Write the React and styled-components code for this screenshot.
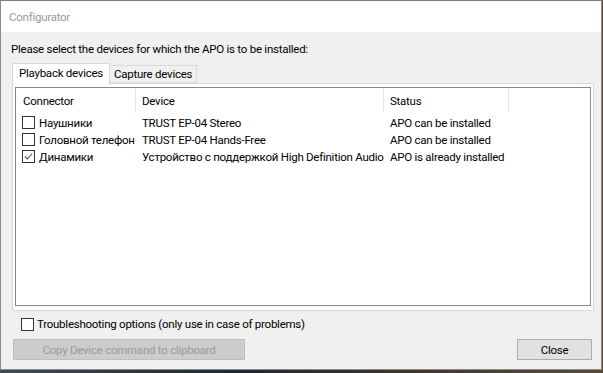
import React from 'react';
import styled, { createGlobalStyle } from 'styled-components';

const Global = createGlobalStyle`
    html, body {
        margin: 0;
        padding: 0;
        background: #2f3a44;
    }
    body {
        font-family: Roboto, "Noto Sans", sans-serif;
        font-size: 11.5px;
        letter-spacing: -0.25px;
        color: #000;
    }
`

const Desktop = styled.div`
    width: 603px;
    height: 373px;
    background: linear-gradient(90deg, #3d4a56, #22272c 40%, #5a4a38 100%);
    overflow: hidden;
`
const Window = styled.div`
    width: 600px;
    height: 368px;
    border: 1px solid #8c8c8c;
    border-top-color: #6e7f92;
    background: #f0f0f0;
    display: flex;
    flex-direction: column;
`
const TitleBar = styled.div`
    height: 31px;
    background: #fff;
    display: flex;
    align-items: center;
    padding-left: 8px;
    color: #999;
`
const Body = styled.div`
    flex: 1;
    padding: 9px 8px 0 10px;
    display: flex;
    flex-direction: column;
`
const Prompt = styled.div`
    line-height: 16px;
    height: 16px;
    margin-bottom: 6px;
`
const Tabs = styled.div`
    display: flex;
    align-items: flex-end;
    margin-left: 1px;
    height: 20px;
    position: relative;
    z-index: 1;
`
const Tab = styled.div`
    box-sizing: border-box;
    height: ${p => p.$active ? '21px' : '18px'};
    margin-bottom: ${p => p.$active ? '-1px' : '0'};
    padding: ${p => p.$active ? '2px 6px 0 6px' : '1px 4px 0 4px'};
    background: ${p => p.$active ? '#fff' : '#f0f0f0'};
    border: 1px solid #d9d9d9;
    border-bottom: ${p => p.$active ? 'none' : '1px solid #d9d9d9'};
    margin-left: ${p => p.$active ? '0' : '-1px'};
    line-height: 15px;
    white-space: nowrap;
`
const Panel = styled.div`
    margin-left: 1px;
    width: 582px;
    height: 228px;
    box-sizing: border-box;
    background: #fff;
    border: 1px solid #d9d9d9;
    padding: 3px 2px 4px 2px;
`
const ListView = styled.div`
    height: 100%;
    box-sizing: border-box;
    border: 1px solid #828790;
    background: #fff;
`
const Grid = styled.div`
    display: grid;
    grid-template-columns: 120px 248px 125px;
`
const HeaderCell = styled.div`
    height: 24px;
    box-sizing: border-box;
    border-right: 1px solid #e5e5e5;
    padding-left: ${p => p.$first ? '7px' : '6px'};
    display: flex;
    align-items: center;
    padding-top: 2px;
    white-space: nowrap;
`
const Rows = styled.div`
    padding-top: 2px;
`
const Row = styled.div`
    display: grid;
    grid-template-columns: 120px 248px 125px;
    height: 17px;
    align-items: center;
    white-space: nowrap;
`
const Cell = styled.div`
    padding-left: 6px;
    display: flex;
    align-items: center;
    gap: 4px;
    overflow: hidden;
`
const Box = styled.span`
    width: 11px;
    height: 11px;
    border: 1px solid #333;
    background: #fff;
    flex: none;
    display: inline-flex;
    align-items: center;
    justify-content: center;
`
const Footer = styled.div`
    display: flex;
    align-items: center;
    gap: 3px;
    margin: 6px 0 0 10px;
    height: 14px;
`
const Buttons = styled.div`
    display: flex;
    justify-content: space-between;
    margin: 8px 1px 0 2px;
`
const Button = styled.div`
    box-sizing: border-box;
    width: ${p => p.$w}px;
    height: 21px;
    display: flex;
    align-items: center;
    justify-content: center;
    background: ${p => p.$disabled ? '#cccccc' : '#e1e1e1'};
    border: 1px solid ${p => p.$disabled ? '#bfbfbf' : '#adadad'};
    color: ${p => p.$disabled ? '#9a9a9a' : '#000'};
`

const Check = ({ checked }) => (
    <Box>
        {checked && (
            <svg width="9" height="9" viewBox="0 0 9 9">
                <path d="M0.8 4.5 L3.3 7 L8.3 1.5" fill="none" stroke="#555" strokeWidth="1.1" />
            </svg>
        )}
    </Box>
)

const devices = [
    { connector: 'Наушники', device: 'TRUST EP-04 Stereo', status: 'APO can be installed', checked: false },
    { connector: 'Головной телефон', device: 'TRUST EP-04 Hands-Free', status: 'APO can be installed', checked: false },
    { connector: 'Динамики', device: 'Устройство с поддержкой High Definition Audio', status: 'APO is already installed', checked: true },
]

export default function App() {
    return (
        <Desktop>
            <Global />
            <Window>
                <TitleBar>Configurator</TitleBar>
                <Body>
                    <Prompt>Please select the devices for which the APO is to be installed:</Prompt>
                    <Tabs>
                        <Tab $active>Playback devices</Tab>
                        <Tab>Capture devices</Tab>
                    </Tabs>
                    <Panel>
                        <ListView>
                            <Grid>
                                <HeaderCell $first>Connector</HeaderCell>
                                <HeaderCell>Device</HeaderCell>
                                <HeaderCell>Status</HeaderCell>
                            </Grid>
                            <Rows>
                                {devices.map(d => (
                                    <Row key={d.connector}>
                                        <Cell>
                                            <Check checked={d.checked} />
                                            {d.connector}
                                        </Cell>
                                        <Cell>{d.device}</Cell>
                                        <Cell>{d.status}</Cell>
                                    </Row>
                                ))}
                            </Rows>
                        </ListView>
                    </Panel>
                    <Footer>
                        <Check />
                        Troubleshooting options (only use in case of problems)
                    </Footer>
                    <Buttons>
                        <Button $w={232} $disabled>Copy Device command to clipboard</Button>
                        <Button $w={75}>Close</Button>
                    </Buttons>
                </Body>
            </Window>
        </Desktop>
    )
}
